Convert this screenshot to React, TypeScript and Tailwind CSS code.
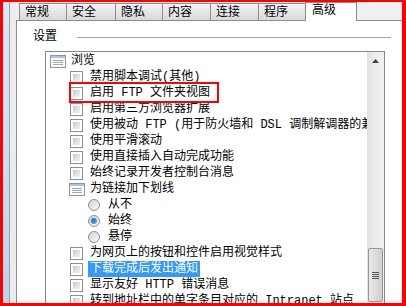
import React from 'react';

type Row = { kind: 'icon' | 'cb' | 'radio'; text: string; level?: number; on?: boolean; selected?: boolean };

const rows: Row[] = [
  { kind: 'icon', level: 0, text: '浏览' },
  { kind: 'cb', text: '禁用脚本调试(其他)' },
  { kind: 'cb', text: '启用 FTP 文件夹视图' },
  { kind: 'cb', text: '启用第三方浏览器扩展' },
  { kind: 'cb', text: '使用被动 FTP (用于防火墙和 DSL 调制解调器的兼容性)' },
  { kind: 'cb', text: '使用平滑滚动' },
  { kind: 'cb', text: '使用直接插入自动完成功能' },
  { kind: 'cb', text: '始终记录开发者控制台消息' },
  { kind: 'icon', level: 1, text: '为链接加下划线' },
  { kind: 'radio', text: '从不' },
  { kind: 'radio', text: '始终', on: true },
  { kind: 'radio', text: '悬停' },
  { kind: 'cb', text: '为网页上的按钮和控件启用视觉样式' },
  { kind: 'cb', text: '下载完成后发出通知', selected: true },
  { kind: 'cb', text: '显示友好 HTTP 错误消息' },
  { kind: 'cb', text: '转到地址栏中的单字条目对应的 Intranet 站点' },
];

const tabs = [
  { label: '常规', w: 'w-[48px]' },
  { label: '安全', w: 'w-[50px]' },
  { label: '隐私', w: 'w-[48px]' },
  { label: '内容', w: 'w-[49px]' },
  { label: '连接', w: 'w-[49px]' },
  { label: '程序', w: 'w-[48px]' },
];

function TreeIcon() {
  return (
    <svg width="16" height="13" viewBox="0 0 16 13" className="shrink-0">
      <rect x="0.5" y="0.5" width="15" height="12" fill="#fff" stroke="#8596ae" />
      <rect x="1" y="1" width="14" height="2" fill="#a9c4e8" />
      <line x1="3" y1="5.5" x2="13" y2="5.5" stroke="#9aa9bf" />
      <line x1="3" y1="7.5" x2="13" y2="7.5" stroke="#9aa9bf" />
      <line x1="3" y1="9.5" x2="13" y2="9.5" stroke="#9aa9bf" />
    </svg>
  );
}

function Checkbox() {
  return (
    <div className="w-[13px] h-[13px] shrink-0 border border-[#8f8f8f] bg-white p-[2px]">
      <div className="w-full h-full bg-gradient-to-br from-[#c5c9cf] to-[#f6f6f6]" />
    </div>
  );
}

function Radio({ on }: { on?: boolean }) {
  return (
    <div className="w-[12px] h-[12px] shrink-0 rounded-full border border-[#8f8f8f] bg-gradient-to-br from-[#d0d3d8] to-[#fafafa] flex items-center justify-center">
      {on && <div className="w-[6px] h-[6px] rounded-full bg-gradient-to-br from-[#1d5fa8] to-[#59b6ea]" />}
    </div>
  );
}

export default function App() {
  return (
    <div className="relative w-[406px] h-[306px] overflow-hidden border-t-2 border-l-[3px] border-r-4 border-b-[3px] border-[#fe0000] font-['Liberation_Mono','Noto_Sans_CJK_SC',monospace] text-[12px] leading-[16px] text-black">
      <div className="flex h-full">
        <div className="w-[6px] bg-gradient-to-b from-[#dbe8f7] to-[#bcd3ee]" />
        <div className="w-px bg-[#9ea3aa]" />
        <div className="w-[6px] bg-[#ececec]" />

        <div className="flex-1 flex flex-col bg-[#f0f0f0] min-w-0">
          {/* Tabs */}
          <div className="h-[18px] flex items-end pl-[3px] shrink-0">
            {tabs.map((t) => (
              <div
                key={t.label}
                className={`${t.w} h-[17px] -mr-px pl-[5px] pt-px border-t border-l border-r border-[#898c95] bg-gradient-to-b from-[#f3f3f3] to-[#d9d9d9] whitespace-nowrap`}
              >
                {t.label}
              </div>
            ))}
            <div className="relative z-10 w-[52px] h-[19px] -mb-px pl-[6px] border-t border-l border-r border-[#898c95] bg-white whitespace-nowrap">
              高级
            </div>
          </div>

          {/* Panel */}
          <div className="flex-1 flex flex-col bg-white border-l border-t border-[#898c95] overflow-hidden">
            <div className="mt-[9px] h-[14px] flex items-center pl-[16px] pr-[11px]">
              <span className="leading-[14px]">设置</span>
              <div className="ml-[20px] flex-1 h-px bg-[#a5a5a5]" />
            </div>

            <div className="mt-[7px] ml-[28px] w-[340px] h-[270px] shrink-0 border border-[#828790] flex">
              <div className="flex-1 min-w-0 overflow-hidden pt-px">
                {rows.map((r, i) => (
                  <div
                    key={i}
                    className={`h-[16px] flex items-center whitespace-nowrap ${
                      r.kind === 'radio' ? 'pl-[42px]' : r.kind === 'cb' ? 'pl-[24px]' : r.level === 0 ? 'pl-[4px]' : 'pl-[23px]'
                    }`}
                  >
                    {r.kind === 'icon' && <TreeIcon />}
                    {r.kind === 'cb' && <Checkbox />}
                    {r.kind === 'radio' && <Radio on={r.on} />}
                    <span
                      className={`h-[16px] px-[2px] ${
                        r.kind === 'icon' ? 'ml-[3px]' : r.kind === 'cb' ? 'ml-[5px]' : 'ml-[6px]'
                      } ${r.selected ? 'bg-[#3399ff] text-white' : ''}`}
                    >
                      {r.text}
                    </span>
                  </div>
                ))}
              </div>

              {/* Scrollbar */}
              <div className="w-[17px] shrink-0 flex flex-col bg-gradient-to-r from-[#e2e2e2] via-[#eeeeee] to-[#f0f0f0]">
                <div className="h-[17px] flex items-center justify-center">
                  <svg width="7" height="4" viewBox="0 0 7 4">
                    <path d="M3.5 0 L7 4 L0 4 Z" fill="#404040" />
                  </svg>
                </div>
                <div className="h-[179px]" />
                <div className="mx-px h-[54px] rounded-[2px] border border-[#979797] bg-gradient-to-r from-[#e9e9e9] via-[#dcdcdc] to-[#cfcfcf] flex flex-col items-center justify-center gap-px">
                  <div className="w-[7px] h-px bg-[#555]" />
                  <div className="w-[7px] h-px bg-[#555]" />
                  <div className="w-[7px] h-px bg-[#555]" />
                  <div className="w-[7px] h-px bg-[#555]" />
                </div>
              </div>
            </div>
          </div>
        </div>
      </div>

      {/* Red annotation box */}
      <div className="absolute left-[66px] top-[80px] w-[150px] h-[21px] border-2 border-[#fe0000]" />
    </div>
  );
}
